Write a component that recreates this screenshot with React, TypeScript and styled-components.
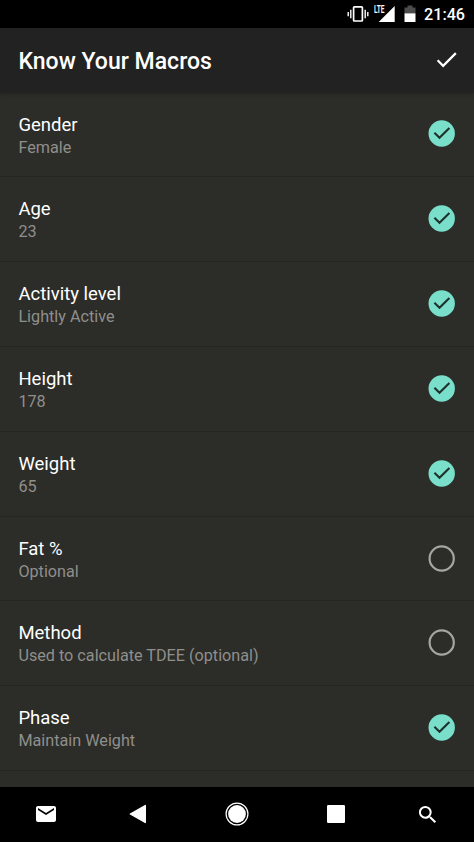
import React from "react";
import styled, { createGlobalStyle } from "styled-components";

const GlobalStyle = createGlobalStyle`
  * { box-sizing: border-box; }
  html, body { margin: 0; padding: 0; background: #000; }
  body { font-family: Roboto, "Liberation Sans", sans-serif; }
`;

const Screen = styled.div`
  width: 474px;
  height: 842px;
  display: flex;
  flex-direction: column;
  overflow: hidden;
  background: #2c2c28;
`;

const StatusBar = styled.div`
  flex: 0 0 27.6px;
  display: flex;
  align-items: center;
  justify-content: flex-end;
  padding-right: 9px;
  background: #000;
`;

const Glyph = styled.svg`
  display: block;
  flex: none;
`;

const Signal = styled.div`
  display: flex;
  width: 21px;
  height: 18px;
  margin: 0 9px 0 5px;
`;

const Network = styled.span`
  flex: 0 0 0;
  width: 0;
  font-size: 11px;
  font-weight: 600;
  line-height: 10px;
  color: #fff;
  white-space: nowrap;
  transform: scaleX(0.6);
  transform-origin: 0 0;
`;

const Clock = styled.time`
  width: 41px;
  margin-left: 8px;
  padding-top: 1px;
  font-size: 16.2px;
  line-height: 27px;
  font-weight: 500;
  color: #fff;
  white-space: nowrap;
`;

const Toolbar = styled.header`
  flex: 0 0 64.5px;
  z-index: 1;
  display: flex;
  align-items: center;
  justify-content: space-between;
  padding: 0 14px 0 18.4px;
  background: #222222;
  box-shadow: 0 1px 4px rgba(0, 0, 0, 0.25);
`;

const Title = styled.h1`
  margin: 0;
  padding-top: 3.4px;
  font-size: 23.04px;
  line-height: 30px;
  font-weight: 500;
  color: #fff;
`;

const ConfirmIcon = styled(Glyph)`
  margin-bottom: 2px;
`;

const List = styled.ul`
  flex: 1 1 0;
  min-height: 0;
  margin: 0;
  padding: 0;
  list-style: none;
  overflow: hidden;
`;

const Row = styled.li`
  height: 84.83px;
  display: flex;
  align-items: flex-start;
  justify-content: space-between;
  padding: 20px 19px 0 18.4px;
  border-bottom: 1px solid #252522;
`;

const Label = styled.div`
  font-size: 18.5px;
  line-height: 24px;
  color: #fff;
`;

const Value = styled.div`
  font-size: 16.2px;
  line-height: 22.8px;
  color: #8f8f8c;
`;

const StateIcon = styled(Glyph)`
  margin-top: 7.9px;
`;

const NavBar = styled.nav`
  flex: 0 0 55.3px;
  display: grid;
  grid-template-columns: 92px 92px 106px 92px 92px;
  align-items: center;
  justify-items: center;
  background: #000;
`;

type Item = { label: string; value: string; done: boolean };

const items: Item[] = [
  { label: "Gender", value: "Female", done: true },
  { label: "Age", value: "23", done: true },
  { label: "Activity level", value: "Lightly Active", done: true },
  { label: "Height", value: "178", done: true },
  { label: "Weight", value: "65", done: true },
  { label: "Fat %", value: "Optional", done: false },
  { label: "Method", value: "Used to calculate TDEE (optional)", done: false },
  { label: "Phase", value: "Maintain Weight", done: true },
];

function State({ done }: { done: boolean }) {
  return (
    <StateIcon width="27" height="27" viewBox="0 0 27 27" fill="none">
      {done ? (
        <>
          <circle cx="13.7" cy="13.5" r="13.2" fill="#79dfca" />
          <path d="M6.4 12.7L11.5 17.8L21.4 7.9" stroke="#20302c" strokeWidth="2.1" />
        </>
      ) : (
        <circle cx="13.7" cy="13.5" r="12.1" stroke="#a5a5a2" strokeWidth="2.2" />
      )}
    </StateIcon>
  );
}

export default function App() {
  return (
    <Screen>
      <GlobalStyle />
      <StatusBar>
        <Glyph width="22" height="18" viewBox="0 0 22 18" fill="none" stroke="#fff" strokeWidth="1.4">
          <rect x="6.6" y="1.8" width="8.8" height="14.2" rx="0.8" strokeWidth="1.7" />
          <path d="M3.8 4.8V13.2M18.2 4.8V13.2M1.2 7V11.2M20.8 7V11.2" />
        </Glyph>
        <Signal>
          <Network>LTE</Network>
          <Glyph width="21" height="18" viewBox="0 0 21 18">
            <path d="M20.7 1V17H4.7Z" fill="#fff" />
          </Glyph>
        </Signal>
        <Glyph width="12" height="18" viewBox="0 0 12 18">
          <path d="M.5 2.5H3.5V.5H8.5V2.5H11.5V8.3H.5Z" fill="#4c4c4c" />
          <path d="M.5 8.3H11.5V17H.5Z" fill="#fff" />
        </Glyph>
        <Clock>21:46</Clock>
      </StatusBar>
      <Toolbar>
        <Title>Know Your Macros</Title>
        <ConfirmIcon width="27" height="27" viewBox="0 0 24 24">
          <path d="M9 16.17L4.83 12l-1.42 1.41L9 19 21 7l-1.41-1.41z" fill="#fff" />
        </ConfirmIcon>
      </Toolbar>
      <List>
        {items.map((item) => (
          <Row key={item.label}>
            <div>
              <Label>{item.label}</Label>
              <Value>{item.value}</Value>
            </div>
            <State done={item.done} />
          </Row>
        ))}
      </List>
      <NavBar>
        <Glyph width="24" height="24" viewBox="0 0 24 24">
          <path
            d="M20 4H4c-1.1 0-1.99.9-1.99 2L2 18c0 1.1.9 2 2 2h16c1.1 0 2-.9 2-2V6c0-1.1-.9-2-2-2zm0 4l-8 5-8-5V6l8 5 8-5v2z"
            fill="#fff"
          />
        </Glyph>
        <Glyph width="20" height="20" viewBox="0 0 20 20">
          <path d="M2.3 10L17.3 1.5V18.5Z" fill="#fff" stroke="#fff" strokeWidth="1.4" strokeLinejoin="round" />
        </Glyph>
        <Glyph width="24" height="24" viewBox="0 0 24 24">
          <circle cx="12" cy="12" r="10.9" fill="none" stroke="#fff" strokeWidth="1.2" />
          <circle cx="12" cy="12" r="8.9" fill="#fff" />
        </Glyph>
        <Glyph width="18" height="18" viewBox="0 0 18 18">
          <rect width="18" height="18" rx="1.2" fill="#fff" />
        </Glyph>
        <Glyph width="23.5" height="23.5" viewBox="0 0 24 24">
          <path
            d="M15.5 14h-.79l-.28-.27A6.471 6.471 0 0 0 16 9.5 6.5 6.5 0 1 0 9.5 16c1.61 0 3.09-.59 4.23-1.57l.27.28v.79l5 4.99L20.49 19l-4.99-5zm-6 0C7.01 14 5 11.99 5 9.5S7.01 5 9.5 5 14 7.01 14 9.5 11.99 14 9.5 14z"
            fill="#fff"
          />
        </Glyph>
      </NavBar>
    </Screen>
  );
}
